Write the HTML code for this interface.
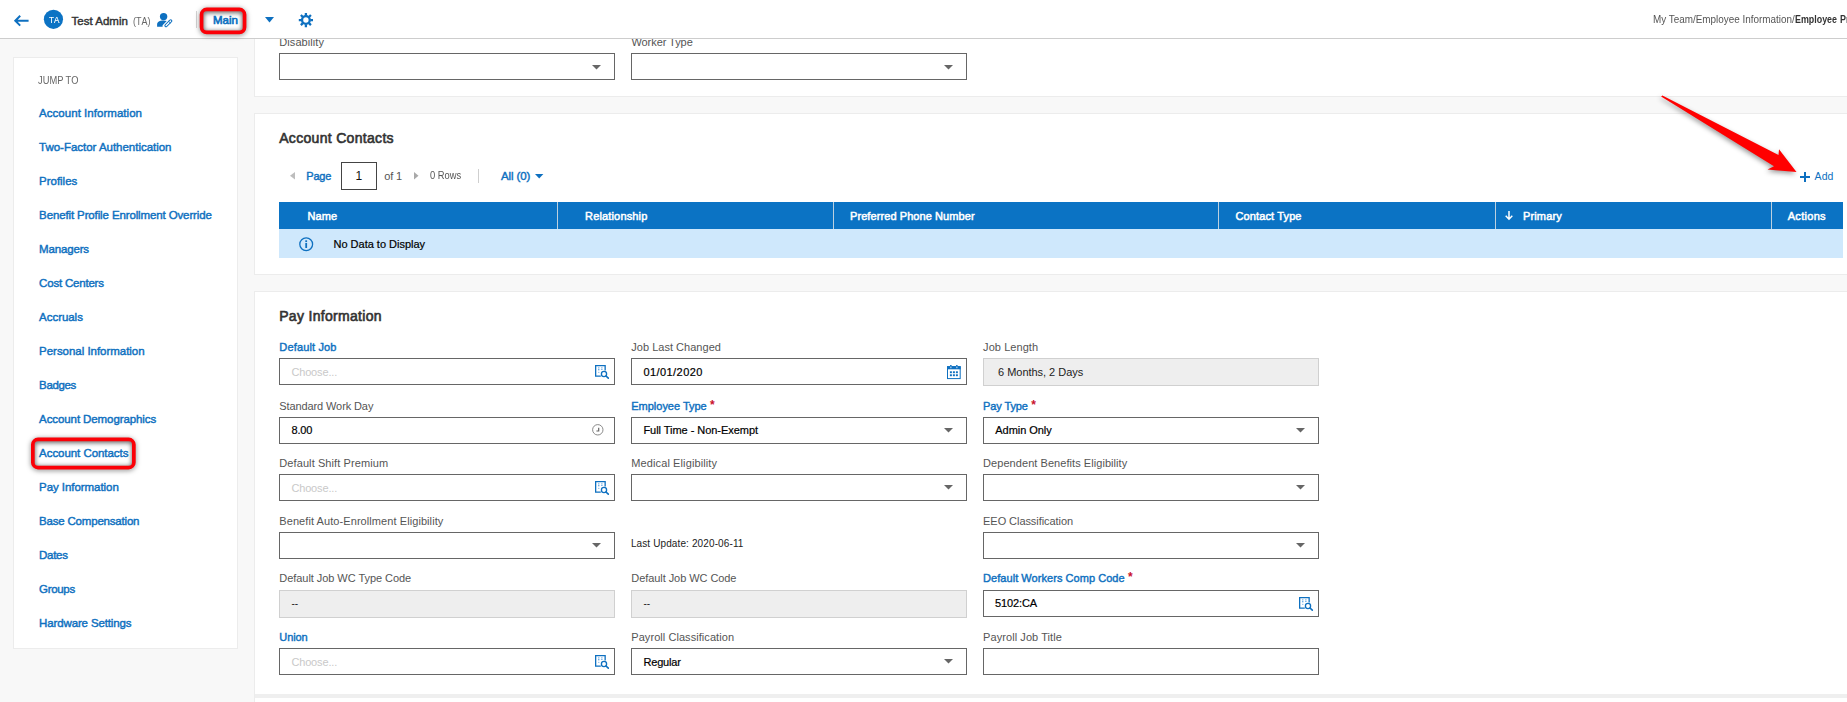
<!DOCTYPE html>
<html lang="en">
<head>
<meta charset="utf-8">
<title>Employee Profile</title>
<style>
html,body{margin:0;padding:0;}
body{width:1847px;height:702px;overflow:hidden;background:#f8f8f8;font-family:"Liberation Sans",sans-serif;position:relative;}
.t{position:absolute;white-space:pre;line-height:20px;}
.b{position:absolute;box-sizing:border-box;}
.card{background:#fff;border:1px solid #ececec;}
.inp{background:#fff;border:1px solid #666;width:336px;height:27px;}
.dis{background:#eee;border:1px solid #d0d0d0;width:336px;height:28px;}
.red{border:3px solid #f2000d;border-radius:7px;box-shadow:0 1px 5px rgba(0,0,0,.55), inset 0 1px 5px rgba(0,0,0,.45);}
svg{position:absolute;overflow:visible;}
</style>
</head>
<body>
<div class="b card" style="left:254px;top:20px;width:1700px;height:77px;"></div>
<div class="b card" style="left:254px;top:113px;width:1700px;height:162px;"></div>
<div class="b card" style="left:254px;top:291px;width:1700px;height:500px;"></div>
<div class="b " style="left:255px;top:694px;width:1700px;height:4px;background:#efefef;"></div>
<div class="b card" style="left:13px;top:57px;width:225px;height:592px;"></div>
<span class="t" style="left:279.3px;top:32px;font-size:11px;color:#555;letter-spacing:0.065px;">Disability</span>
<span class="t" style="left:631.4px;top:32px;font-size:11px;color:#555;letter-spacing:-0.055px;">Worker Type</span>
<div class="b inp" style="left:279px;top:53px;"></div>
<svg style="left:591.9px;top:64.55px" width="9" height="4.5" viewBox="0 0 9 4.5"><path d="M0 0H9L4.5 4.5Z" fill="#666"/></svg>
<div class="b inp" style="left:631px;top:53px;"></div>
<svg style="left:943.9px;top:64.55px" width="9" height="4.5" viewBox="0 0 9 4.5"><path d="M0 0H9L4.5 4.5Z" fill="#666"/></svg>
<span class="t" style="left:279.2px;top:128px;font-size:14px;color:#333;letter-spacing:0.311px;-webkit-text-stroke:0.62px #333;">Account Contacts</span>
<svg style="left:289.5px;top:172.2px" width="5" height="7.4" viewBox="0 0 5 7.4"><path d="M5 0V7.4L0 3.7Z" fill="#bdbdbd"/></svg>
<span class="t" style="left:306.2px;top:166px;font-size:11.0px;color:#0e70c0;letter-spacing:-0.134px;-webkit-text-stroke:0.41px #0e70c0;">Page</span>
<div class="b " style="left:341px;top:162px;width:36px;height:28px;background:#fff;border:1px solid #444;"></div>
<span class="t" style="left:355.6px;top:166px;font-size:12px;color:#111;">1</span>
<span class="t" style="left:384.3px;top:166px;font-size:11.0px;color:#555;letter-spacing:-0.186px;">of 1</span>
<svg style="left:414px;top:172.2px" width="4.5" height="7.4" viewBox="0 0 4.5 7.4"><path d="M0 0V7.4L4.5 3.7Z" fill="#a9a9a9"/></svg>
<span class="t" style="left:429.6px;top:166px;font-size:10px;color:#555;transform:scaleX(0.9353);transform-origin:0 0;">0 Rows</span>
<div class="b " style="left:478px;top:169px;width:1px;height:14px;background:#cfcfcf;"></div>
<span class="t" style="left:500.9px;top:166px;font-size:11.5px;color:#0e70c0;letter-spacing:-0.105px;-webkit-text-stroke:0.43px #0e70c0;">All (0)</span>
<svg style="left:535.1999999999999px;top:174.0px" width="8.4" height="4.6" viewBox="0 0 8.4 4.6"><path d="M0 0H8.4L4.2 4.6Z" fill="#0e70c0"/></svg>
<svg style="left:1800px;top:171.5px" width="10" height="10" viewBox="0 0 10 10"><path d="M5 0V10M0 5H10" stroke="#0e70c0" stroke-width="2"/></svg>
<span class="t" style="left:1814.6px;top:166px;font-size:10.5px;color:#0e70c0;letter-spacing:0.056px;">Add</span>
<div class="b " style="left:279px;top:202px;width:1564px;height:27px;background:#0b73c4;"></div>
<div class="b " style="left:279px;top:229px;width:1564px;height:29px;background:#cfe8fc;"></div>
<div class="b " style="left:557px;top:202px;width:1px;height:27px;background:#bcd0df;"></div>
<div class="b " style="left:833px;top:202px;width:1px;height:27px;background:#bcd0df;"></div>
<div class="b " style="left:1218px;top:202px;width:1px;height:27px;background:#bcd0df;"></div>
<div class="b " style="left:1495px;top:202px;width:1px;height:27px;background:#bcd0df;"></div>
<div class="b " style="left:1771px;top:202px;width:1px;height:27px;background:#bcd0df;"></div>
<span class="t" style="left:307.5px;top:206px;font-size:11px;color:#fff;letter-spacing:0.085px;-webkit-text-stroke:0.5px #fff;">Name</span>
<span class="t" style="left:585.1px;top:206px;font-size:11px;color:#fff;letter-spacing:0.15px;-webkit-text-stroke:0.5px #fff;">Relationship</span>
<span class="t" style="left:850px;top:206px;font-size:11px;color:#fff;letter-spacing:0.081px;-webkit-text-stroke:0.5px #fff;">Preferred Phone Number</span>
<span class="t" style="left:1235.5px;top:206px;font-size:11px;color:#fff;letter-spacing:0.125px;-webkit-text-stroke:0.5px #fff;">Contact Type</span>
<span class="t" style="left:1522.9px;top:206px;font-size:11px;color:#fff;letter-spacing:0.168px;-webkit-text-stroke:0.5px #fff;">Primary</span>
<span class="t" style="left:1787.7px;top:206px;font-size:11px;color:#fff;letter-spacing:0.304px;-webkit-text-stroke:0.5px #fff;">Actions</span>
<svg style="left:1505.3px;top:210.6px" width="8" height="9.2" viewBox="0 0 8 9.2"><path d="M4 0V8M0.7 4.8L4 8.2L7.3 4.8" fill="none" stroke="#fff" stroke-width="1.5"/></svg>
<svg style="left:298.8px;top:237px" width="14.4" height="14.4" viewBox="0 0 14.4 14.4"><circle cx="7.2" cy="7.2" r="6.4" fill="none" stroke="#0e70c0" stroke-width="1.3"/><rect x="6.3" y="6" width="1.8" height="5" fill="#0e70c0"/><rect x="6.3" y="3.3" width="1.8" height="1.8" fill="#0e70c0"/></svg>
<span class="t" style="left:333.5px;top:234px;font-size:11px;color:#000;letter-spacing:-0.007px;-webkit-text-stroke:0.2px #000;">No Data to Display</span>
<span class="t" style="left:279.2px;top:306px;font-size:14px;color:#333;letter-spacing:0.31px;-webkit-text-stroke:0.62px #333;">Pay Information</span>
<span class="t" style="left:279.3px;top:337px;font-size:11px;color:#0e70c0;letter-spacing:0.154px;-webkit-text-stroke:0.41px #0e70c0;">Default Job</span>
<div class="b inp" style="left:279px;top:358px;"></div>
<svg style="left:595.2px;top:365px" width="14" height="14" viewBox="0 0 14 14"><path d="M5.8 11.15H0.65V0.65H10.15V5.4" fill="none" stroke="#0e70c0" stroke-width="1.3"/><rect x="3.1" y="2.4" width="1.3" height="1" fill="#4f9ade"/><rect x="6.2" y="2.4" width="1.3" height="1" fill="#4f9ade"/><rect x="3.1" y="4.1" width="1.3" height="1.2" fill="#4f9ade"/><rect x="6.2" y="4.1" width="1.3" height="0.9" fill="#4f9ade"/><rect x="3.1" y="6.9" width="1.3" height="0.7" fill="#4f9ade"/><circle cx="9" cy="9" r="2.6" fill="#fff" stroke="#0e70c0" stroke-width="1.3"/><path d="M11 11L13.3 13.2" stroke="#0e70c0" stroke-width="1.6" stroke-linecap="round"/></svg>
<span class="t" style="left:291.4px;top:362px;font-size:11px;color:#c9c9c9;letter-spacing:-0.149px;">Choose...</span>
<span class="t" style="left:631.3px;top:337px;font-size:11px;color:#555;letter-spacing:0.02px;">Job Last Changed</span>
<div class="b inp" style="left:631px;top:358px;"></div>
<span class="t" style="left:643.4px;top:362px;font-size:11px;color:#000;letter-spacing:0.438px;-webkit-text-stroke:0.2px #000;">01/01/2020</span>
<span class="t" style="left:983.1px;top:337px;font-size:11px;color:#555;letter-spacing:0.062px;">Job Length</span>
<div class="b dis" style="left:983px;top:358px;"></div>
<span class="t" style="left:998.1px;top:362px;font-size:11px;color:#222;letter-spacing:-0.033px;">6 Months, 2 Days</span>
<svg style="left:947.1px;top:364.7px" width="13.7" height="14.2" viewBox="0 0 13.7 14.2"><rect x="0.5" y="1.7" width="12.7" height="11.9" fill="#fff" stroke="#0e70c0" stroke-width="1"/><rect x="0" y="1.2" width="13.7" height="3.1" fill="#0e70c0"/><rect x="3.1" y="0" width="1.5" height="1.6" fill="#0e70c0"/><rect x="9.1" y="0" width="1.5" height="1.6" fill="#0e70c0"/><rect x="3.1" y="1.6" width="1.5" height="1.6" fill="#9cc4ea"/><rect x="9.1" y="1.6" width="1.5" height="1.6" fill="#9cc4ea"/><rect x="2.9" y="6.3" width="2" height="1.9" fill="#0e70c0"/><rect x="2.9" y="9.3" width="2" height="1.9" fill="#0e70c0"/><rect x="5.9" y="6.3" width="2" height="1.9" fill="#0e70c0"/><rect x="5.9" y="9.3" width="2" height="1.9" fill="#0e70c0"/><rect x="8.9" y="6.3" width="2" height="1.9" fill="#0e70c0"/><rect x="8.9" y="9.3" width="2" height="1.9" fill="#0e70c0"/></svg>
<span class="t" style="left:279.3px;top:396px;font-size:11px;color:#555;letter-spacing:-0.106px;">Standard Work Day</span>
<div class="b inp" style="left:279px;top:417px;"></div>
<span class="t" style="left:291.4px;top:420px;font-size:11px;color:#000;letter-spacing:-0.107px;-webkit-text-stroke:0.2px #000;">8.00</span>
<svg style="left:591.5px;top:424.2px" width="11.6" height="11.6" viewBox="0 0 11.6 11.6"><circle cx="5.8" cy="5.8" r="5.2" fill="none" stroke="#8a8a8a" stroke-width="1"/><path d="M6.7 3.7V7H4.4" fill="none" stroke="#666" stroke-width="1.2"/></svg>
<span class="t" style="left:631.3px;top:396px;font-size:11px;color:#0e70c0;letter-spacing:-0.019px;-webkit-text-stroke:0.41px #0e70c0;">Employee Type</span>
<span class="t" style="left:710.0px;top:395px;font-size:12px;color:#c9102d;font-weight:700;">*</span>
<div class="b inp" style="left:631px;top:417px;"></div>
<svg style="left:943.9px;top:427.65px" width="9" height="4.5" viewBox="0 0 9 4.5"><path d="M0 0H9L4.5 4.5Z" fill="#666"/></svg>
<span class="t" style="left:643.4px;top:420px;font-size:11px;color:#000;letter-spacing:-0.04px;-webkit-text-stroke:0.2px #000;">Full Time - Non-Exempt</span>
<span class="t" style="left:983.1px;top:396px;font-size:11px;color:#0e70c0;letter-spacing:-0.125px;-webkit-text-stroke:0.41px #0e70c0;">Pay Type</span>
<span class="t" style="left:1031.2px;top:395px;font-size:12px;color:#c9102d;font-weight:700;">*</span>
<div class="b inp" style="left:983px;top:417px;"></div>
<svg style="left:1295.9px;top:427.65px" width="9" height="4.5" viewBox="0 0 9 4.5"><path d="M0 0H9L4.5 4.5Z" fill="#666"/></svg>
<span class="t" style="left:995.3px;top:420px;font-size:11px;color:#000;letter-spacing:-0.051px;-webkit-text-stroke:0.2px #000;">Admin Only</span>
<span class="t" style="left:279.3px;top:453px;font-size:11px;color:#555;letter-spacing:0.091px;">Default Shift Premium</span>
<div class="b inp" style="left:279px;top:474px;"></div>
<svg style="left:595.2px;top:481px" width="14" height="14" viewBox="0 0 14 14"><path d="M5.8 11.15H0.65V0.65H10.15V5.4" fill="none" stroke="#0e70c0" stroke-width="1.3"/><rect x="3.1" y="2.4" width="1.3" height="1" fill="#4f9ade"/><rect x="6.2" y="2.4" width="1.3" height="1" fill="#4f9ade"/><rect x="3.1" y="4.1" width="1.3" height="1.2" fill="#4f9ade"/><rect x="6.2" y="4.1" width="1.3" height="0.9" fill="#4f9ade"/><rect x="3.1" y="6.9" width="1.3" height="0.7" fill="#4f9ade"/><circle cx="9" cy="9" r="2.6" fill="#fff" stroke="#0e70c0" stroke-width="1.3"/><path d="M11 11L13.3 13.2" stroke="#0e70c0" stroke-width="1.6" stroke-linecap="round"/></svg>
<span class="t" style="left:291.4px;top:478px;font-size:11px;color:#c9c9c9;letter-spacing:-0.149px;">Choose...</span>
<span class="t" style="left:631.3px;top:453px;font-size:11px;color:#555;letter-spacing:0.107px;">Medical Eligibility</span>
<div class="b inp" style="left:631px;top:474px;"></div>
<svg style="left:943.9px;top:484.65px" width="9" height="4.5" viewBox="0 0 9 4.5"><path d="M0 0H9L4.5 4.5Z" fill="#666"/></svg>
<span class="t" style="left:983.1px;top:453px;font-size:11px;color:#555;letter-spacing:0.056px;">Dependent Benefits Eligibility</span>
<div class="b inp" style="left:983px;top:474px;"></div>
<svg style="left:1295.9px;top:484.65px" width="9" height="4.5" viewBox="0 0 9 4.5"><path d="M0 0H9L4.5 4.5Z" fill="#666"/></svg>
<span class="t" style="left:279.3px;top:511px;font-size:11px;color:#555;letter-spacing:0.076px;">Benefit Auto-Enrollment Eligibility</span>
<div class="b inp" style="left:279px;top:532px;"></div>
<svg style="left:591.9px;top:542.65px" width="9" height="4.5" viewBox="0 0 9 4.5"><path d="M0 0H9L4.5 4.5Z" fill="#666"/></svg>
<span class="t" style="left:630.9px;top:534px;font-size:10px;color:#222;letter-spacing:0.118px;">Last Update: 2020-06-11</span>
<span class="t" style="left:983.1px;top:511px;font-size:11px;color:#555;letter-spacing:-0.064px;">EEO Classification</span>
<div class="b inp" style="left:983px;top:532px;"></div>
<svg style="left:1295.9px;top:542.65px" width="9" height="4.5" viewBox="0 0 9 4.5"><path d="M0 0H9L4.5 4.5Z" fill="#666"/></svg>
<span class="t" style="left:279.3px;top:568px;font-size:11px;color:#555;letter-spacing:-0.052px;">Default Job WC Type Code</span>
<div class="b dis" style="left:279px;top:590px;"></div>
<span class="t" style="left:291.4px;top:594px;font-size:10.0px;color:#222;letter-spacing:-0.072px;">--</span>
<span class="t" style="left:631.3px;top:568px;font-size:11px;color:#555;letter-spacing:-0.066px;">Default Job WC Code</span>
<div class="b dis" style="left:631px;top:590px;"></div>
<span class="t" style="left:643.5px;top:594px;font-size:10.0px;color:#222;letter-spacing:-0.172px;">--</span>
<span class="t" style="left:983.1px;top:568px;font-size:11px;color:#0e70c0;letter-spacing:0.046px;-webkit-text-stroke:0.41px #0e70c0;">Default Workers Comp Code</span>
<span class="t" style="left:1127.8999999999999px;top:567px;font-size:12px;color:#c9102d;font-weight:700;">*</span>
<div class="b inp" style="left:983px;top:590px;"></div>
<svg style="left:1299.2px;top:597px" width="14" height="14" viewBox="0 0 14 14"><path d="M5.8 11.15H0.65V0.65H10.15V5.4" fill="none" stroke="#0e70c0" stroke-width="1.3"/><rect x="3.1" y="2.4" width="1.3" height="1" fill="#4f9ade"/><rect x="6.2" y="2.4" width="1.3" height="1" fill="#4f9ade"/><rect x="3.1" y="4.1" width="1.3" height="1.2" fill="#4f9ade"/><rect x="6.2" y="4.1" width="1.3" height="0.9" fill="#4f9ade"/><rect x="3.1" y="6.9" width="1.3" height="0.7" fill="#4f9ade"/><circle cx="9" cy="9" r="2.6" fill="#fff" stroke="#0e70c0" stroke-width="1.3"/><path d="M11 11L13.3 13.2" stroke="#0e70c0" stroke-width="1.6" stroke-linecap="round"/></svg>
<span class="t" style="left:995.1px;top:593px;font-size:11px;color:#000;letter-spacing:-0.135px;-webkit-text-stroke:0.2px #000;">5102:CA</span>
<span class="t" style="left:279.3px;top:627px;font-size:11px;color:#0e70c0;letter-spacing:-0.088px;-webkit-text-stroke:0.41px #0e70c0;">Union</span>
<div class="b inp" style="left:279px;top:648px;"></div>
<svg style="left:595.2px;top:655px" width="14" height="14" viewBox="0 0 14 14"><path d="M5.8 11.15H0.65V0.65H10.15V5.4" fill="none" stroke="#0e70c0" stroke-width="1.3"/><rect x="3.1" y="2.4" width="1.3" height="1" fill="#4f9ade"/><rect x="6.2" y="2.4" width="1.3" height="1" fill="#4f9ade"/><rect x="3.1" y="4.1" width="1.3" height="1.2" fill="#4f9ade"/><rect x="6.2" y="4.1" width="1.3" height="0.9" fill="#4f9ade"/><rect x="3.1" y="6.9" width="1.3" height="0.7" fill="#4f9ade"/><circle cx="9" cy="9" r="2.6" fill="#fff" stroke="#0e70c0" stroke-width="1.3"/><path d="M11 11L13.3 13.2" stroke="#0e70c0" stroke-width="1.6" stroke-linecap="round"/></svg>
<span class="t" style="left:291.4px;top:652px;font-size:11px;color:#c9c9c9;letter-spacing:-0.149px;">Choose...</span>
<span class="t" style="left:631.3px;top:627px;font-size:11px;color:#555;letter-spacing:0.058px;">Payroll Classification</span>
<div class="b inp" style="left:631px;top:648px;"></div>
<svg style="left:943.9px;top:658.65px" width="9" height="4.5" viewBox="0 0 9 4.5"><path d="M0 0H9L4.5 4.5Z" fill="#666"/></svg>
<span class="t" style="left:643.5px;top:652px;font-size:11px;color:#000;letter-spacing:-0.205px;-webkit-text-stroke:0.2px #000;">Regular</span>
<span class="t" style="left:983.1px;top:627px;font-size:11px;color:#555;letter-spacing:0.071px;">Payroll Job Title</span>
<div class="b inp" style="left:983px;top:648px;"></div>
<span class="t" style="left:38.2px;top:71px;font-size:10px;color:#666;transform:scaleX(0.9317);transform-origin:0 0;">JUMP TO</span>
<span class="t" style="left:39.1px;top:103px;font-size:11.5px;color:#0e70c0;letter-spacing:0.034px;-webkit-text-stroke:0.43px #0e70c0;">Account Information</span>
<span class="t" style="left:39.1px;top:137px;font-size:11.5px;color:#0e70c0;letter-spacing:-0.024px;-webkit-text-stroke:0.43px #0e70c0;">Two-Factor Authentication</span>
<span class="t" style="left:39.1px;top:171px;font-size:11.5px;color:#0e70c0;letter-spacing:-0.023px;-webkit-text-stroke:0.43px #0e70c0;">Profiles</span>
<span class="t" style="left:39.1px;top:205px;font-size:11.5px;color:#0e70c0;letter-spacing:-0.125px;-webkit-text-stroke:0.43px #0e70c0;">Benefit Profile Enrollment Override</span>
<span class="t" style="left:39.1px;top:239px;font-size:11.5px;color:#0e70c0;letter-spacing:-0.163px;-webkit-text-stroke:0.43px #0e70c0;">Managers</span>
<span class="t" style="left:39.1px;top:273px;font-size:11.5px;color:#0e70c0;letter-spacing:-0.201px;-webkit-text-stroke:0.43px #0e70c0;">Cost Centers</span>
<span class="t" style="left:39.1px;top:307px;font-size:11.5px;color:#0e70c0;letter-spacing:-0.044px;-webkit-text-stroke:0.43px #0e70c0;">Accruals</span>
<span class="t" style="left:39.1px;top:341px;font-size:11.5px;color:#0e70c0;letter-spacing:-0.033px;-webkit-text-stroke:0.43px #0e70c0;">Personal Information</span>
<span class="t" style="left:39.1px;top:375px;font-size:11.5px;color:#0e70c0;letter-spacing:-0.363px;-webkit-text-stroke:0.43px #0e70c0;">Badges</span>
<span class="t" style="left:39.1px;top:409px;font-size:11.5px;color:#0e70c0;letter-spacing:-0.095px;-webkit-text-stroke:0.43px #0e70c0;">Account Demographics</span>
<span class="t" style="left:39.1px;top:443px;font-size:11.5px;color:#0e70c0;letter-spacing:-0.056px;-webkit-text-stroke:0.43px #0e70c0;">Account Contacts</span>
<span class="t" style="left:39.1px;top:477px;font-size:11.5px;color:#0e70c0;letter-spacing:-0.06px;-webkit-text-stroke:0.43px #0e70c0;">Pay Information</span>
<span class="t" style="left:39.1px;top:511px;font-size:11.5px;color:#0e70c0;letter-spacing:-0.198px;-webkit-text-stroke:0.43px #0e70c0;">Base Compensation</span>
<span class="t" style="left:39.1px;top:545px;font-size:11.5px;color:#0e70c0;letter-spacing:-0.312px;-webkit-text-stroke:0.43px #0e70c0;">Dates</span>
<span class="t" style="left:39.1px;top:579px;font-size:11.5px;color:#0e70c0;letter-spacing:-0.324px;-webkit-text-stroke:0.43px #0e70c0;">Groups</span>
<span class="t" style="left:39.1px;top:613px;font-size:11.5px;color:#0e70c0;letter-spacing:-0.138px;-webkit-text-stroke:0.43px #0e70c0;">Hardware Settings</span>
<div class="b" style="left:34.0px;top:440.6px;width:98.69999999999999px;height:25.799999999999955px;border-radius:4.0px;box-shadow:inset 0 1px 5px rgba(0,0,0,.38);"></div>
<svg style="left:0;top:0;filter:drop-shadow(0 1px 2.5px rgba(0,0,0,.5))" width="1847" height="702" viewBox="0 0 1847 702"><rect x="32.85" y="439.45000000000005" width="100.99999999999999" height="28.099999999999955" rx="5.15" fill="none" stroke="#fb0007" stroke-width="3.7"/></svg>
<div class="b " style="left:0px;top:0px;width:1847px;height:38px;background:#fff;"></div>
<div class="b " style="left:0px;top:38px;width:1847px;height:1px;background:#cdcdcd;"></div>
<svg style="left:14.4px;top:14.8px" width="14.6" height="11.4" viewBox="0 0 14.6 11.4"><path d="M1.4 5.7H14.6M6.2 0.8L1.3 5.7L6.2 10.6" fill="none" stroke="#0e70c0" stroke-width="2"/></svg>
<svg style="left:0;top:0" width="80" height="38" viewBox="0 0 80 38"><circle cx="53.45" cy="19.3" r="9.6" fill="#0c73c4"/></svg>
<span class="t" style="left:48.6px;top:10px;font-size:9.5px;color:#fff;-webkit-text-stroke:0.15px #fff;font-kerning:none;transform:scaleX(0.8566);transform-origin:0 0;">TA</span>
<span class="t" style="left:71.5px;top:11px;font-size:11.5px;color:#333;letter-spacing:0.017px;-webkit-text-stroke:0.43px #333;">Test Admin</span>
<span class="t" style="left:132.6px;top:11px;font-size:10.5px;color:#666;font-kerning:none;transform:scaleX(0.8569);transform-origin:0 0;">(TA)</span>
<svg style="left:0;top:0" width="200" height="38" viewBox="0 0 200 38"><circle cx="163.6" cy="16.6" r="3.7" fill="#0e70c0"/><path d="M157.1 26.7V24.6C157.1 21.6 159.9 20.5 163.3 20.5C164.6 20.5 165.8 20.7 166.7 21.1L162.6 25.2V26.7Z" fill="#0e70c0"/><path d="M166 25.6L170.7 20.9" stroke="#0e70c0" stroke-width="3.3" stroke-linecap="round"/><path d="M166.1 25.5L170.6 21" stroke="#fff" stroke-width="1.3" stroke-linecap="round"/><path d="M168.4 21.1L170.5 23.2" stroke="#0e70c0" stroke-width="0.9"/></svg>
<div class="b " style="left:196px;top:11px;width:1px;height:17px;background:#d5d5d5;"></div>
<div class="b" style="left:202.7px;top:10.600000000000001px;width:40.70000000000002px;height:20.699999999999996px;border-radius:4.0px;box-shadow:inset 0 1px 5px rgba(0,0,0,.38);"></div>
<svg style="left:0;top:0;filter:drop-shadow(0 1px 2.5px rgba(0,0,0,.5))" width="1847" height="702" viewBox="0 0 1847 702"><rect x="201.54999999999998" y="9.45" width="43.000000000000014" height="22.999999999999996" rx="5.15" fill="none" stroke="#fb0007" stroke-width="3.7"/></svg>
<span class="t" style="left:212.9px;top:10px;font-size:11.5px;color:#0e70c0;letter-spacing:0.021px;-webkit-text-stroke:0.65px #0e70c0;">Main</span>
<svg style="left:264.9px;top:17.3px" width="9" height="5.4" viewBox="0 0 9 5.4"><path d="M0 0H9L4.5 5.4Z" fill="#0e70c0"/></svg>
<svg style="left:0;top:0" width="330" height="38" viewBox="0 0 330 38"><path d="M310.30 21.20L313.00 21.20L313.00 18.90L310.30 18.90ZM308.20 23.97L310.11 25.88L311.73 24.26L309.82 22.35ZM304.75 24.45L304.75 27.15L307.05 27.15L307.05 24.45ZM301.98 22.35L300.07 24.26L301.69 25.88L303.60 23.97ZM301.50 18.90L298.80 18.90L298.80 21.20L301.50 21.20ZM303.60 16.13L301.69 14.22L300.07 15.84L301.98 17.75ZM307.05 15.65L307.05 12.95L304.75 12.95L304.75 15.65ZM309.82 17.75L311.73 15.84L310.11 14.22L308.20 16.13Z" fill="#0e70c0"/><circle cx="305.9" cy="20.05" r="3.85" fill="none" stroke="#0e70c0" stroke-width="2.3"/></svg>
<span class="t" style="left:1653.1px;top:9px;font-size:10.5px;color:#555;transform:scaleX(0.9430);transform-origin:0 0;">My Team/Employee Information/</span>
<span class="t" style="left:1795.2px;top:9px;font-size:10.5px;color:#333;font-weight:700;transform:scaleX(0.8466);transform-origin:0 0;">Employee</span>
<span class="t" style="left:1839.8px;top:9px;font-size:10.5px;color:#333;font-weight:700;transform:scaleX(.85);transform-origin:0 0;">Profile</span>
<svg style="left:0;top:0;filter:drop-shadow(-1px 2px 2.5px rgba(0,0,0,.4))" width="1847" height="702" viewBox="0 0 1847 702"><path d="M1661.1 96.6L1662.4 95.4L1778.5 155L1779 149.3L1796.5 172.1L1767.5 169.6L1774 166.3Z" fill="#ff0000"/></svg>

</body>
</html>
